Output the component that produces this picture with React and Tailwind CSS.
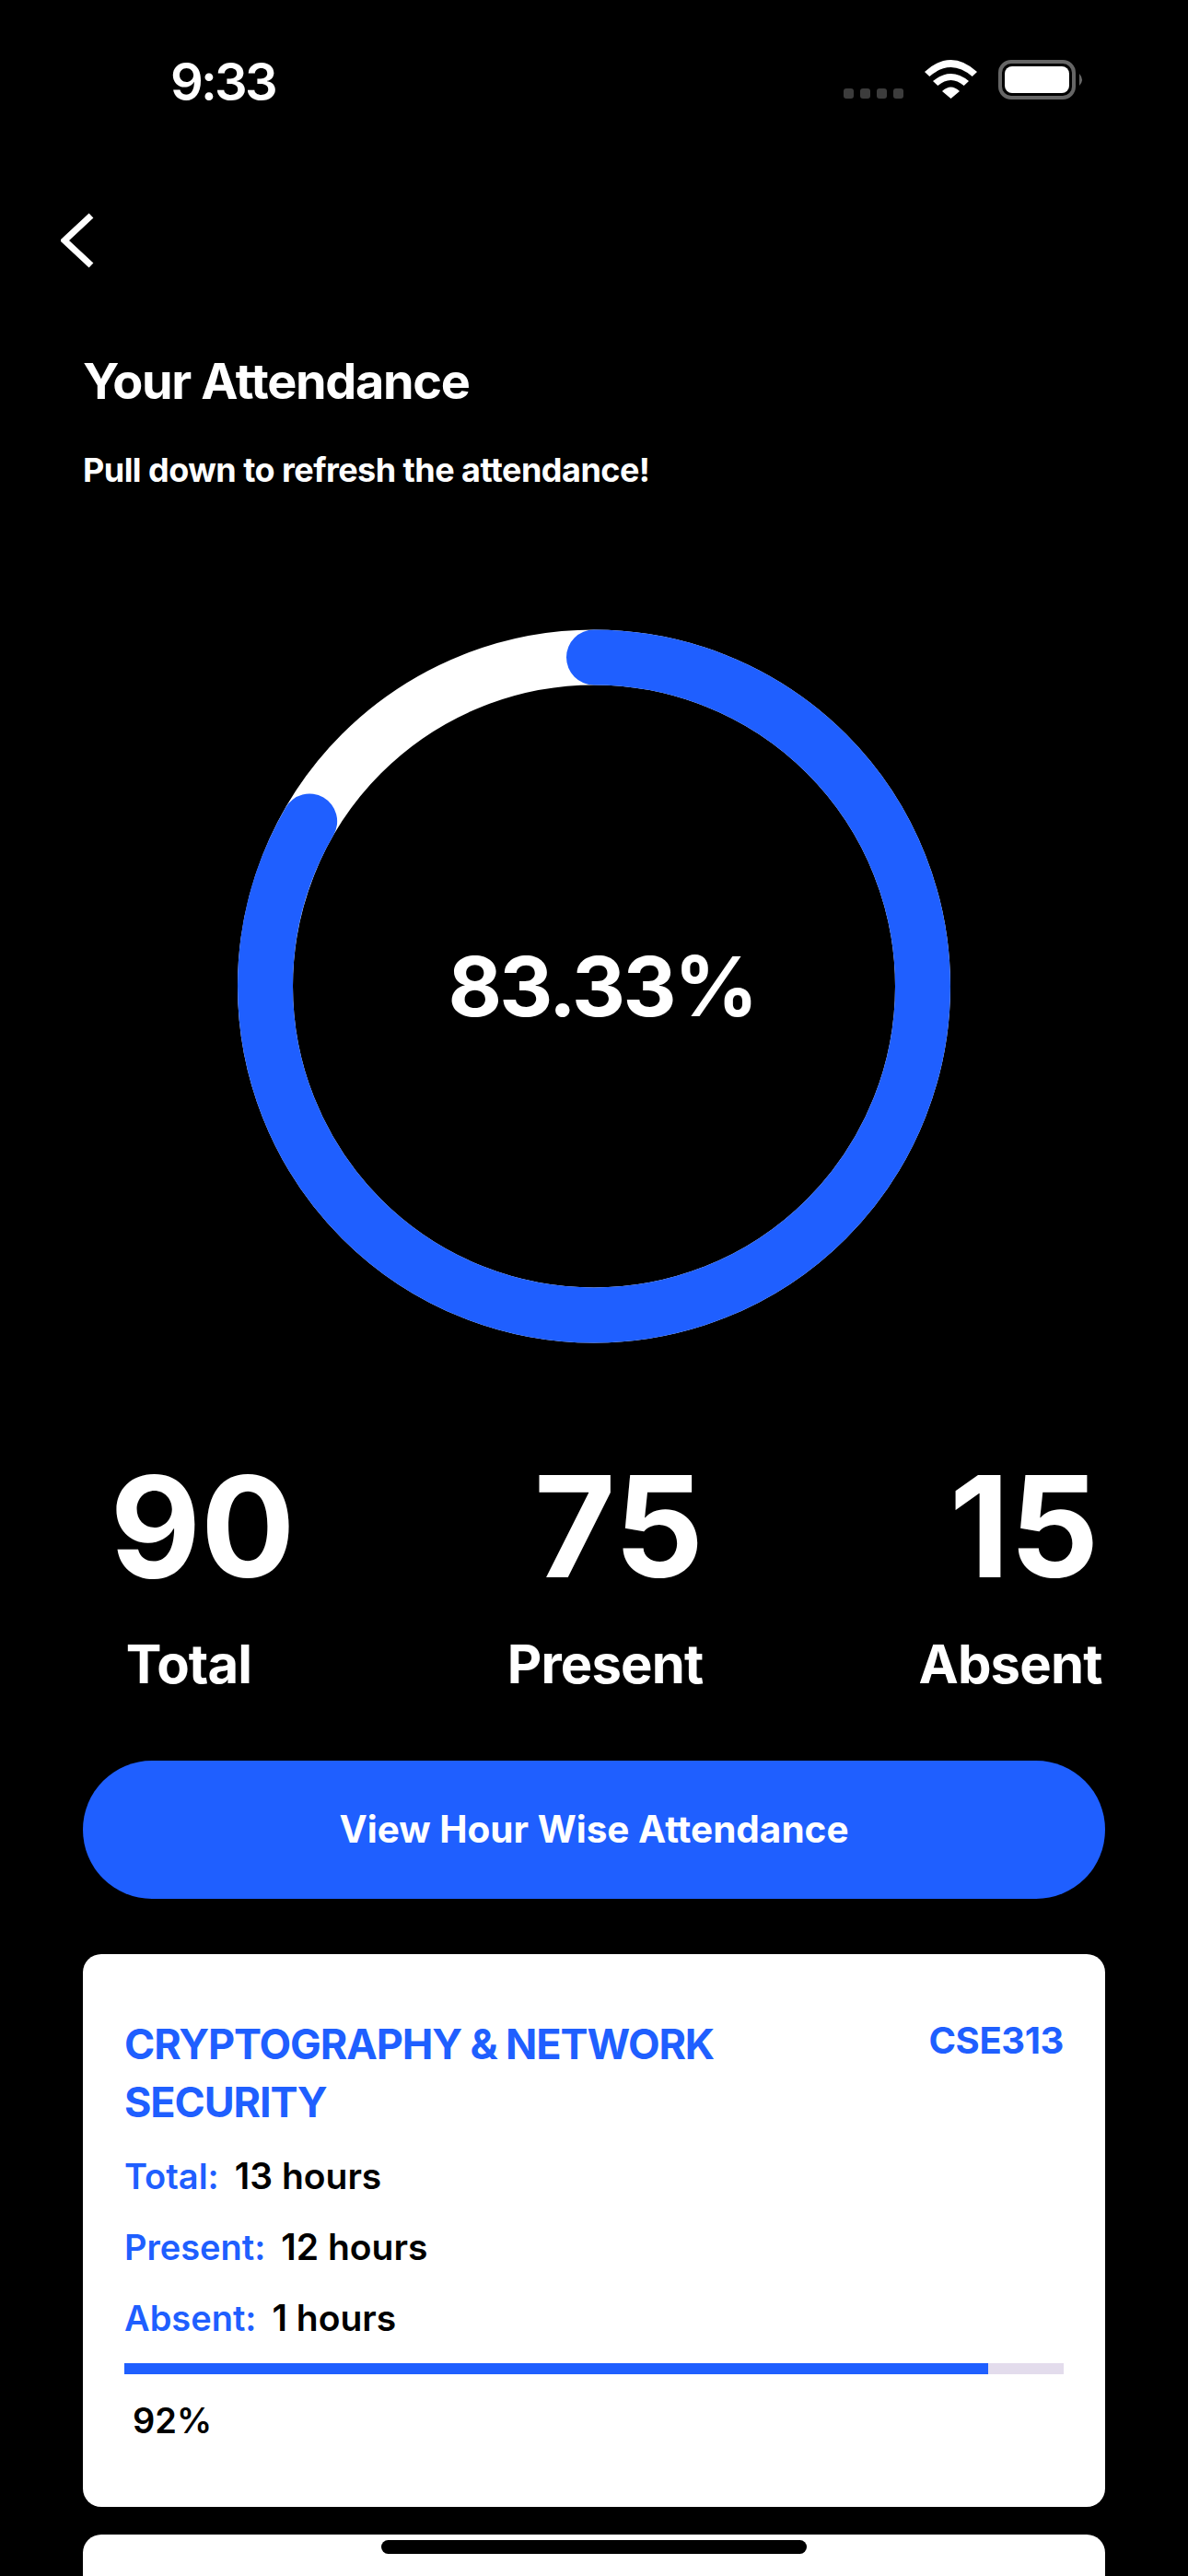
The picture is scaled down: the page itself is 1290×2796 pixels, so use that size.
const StatusBar = () => (
    <div className="flex h-[131px] items-start justify-between pt-[59px] pl-[185px] pr-[112px] text-white">
        <span className="text-[56px] leading-[60px] font-semibold tracking-[-0.05em]">9:33</span>
        <div className="flex items-start pt-[6px]">
            <div className="mt-[31px] flex gap-[7px]">
                <span className="h-[11px] w-[11px] rounded-[3px] bg-[#3c3c3c]" />
                <span className="h-[11px] w-[11px] rounded-[3px] bg-[#3c3c3c]" />
                <span className="h-[11px] w-[11px] rounded-[3px] bg-[#3c3c3c]" />
                <span className="h-[11px] w-[11px] rounded-[3px] bg-[#3c3c3c]" />
            </div>
            <svg className="ml-[23px]" width="57" height="42" viewBox="0 0 57 42" fill="#fff">
                <path d="M0 13 Q28.5 -13 57 13 L51.7 18 Q28.5 -2 5.3 18 Z" />
                <path d="M9 23 Q28.5 7 48 23 L42.7 28 Q28.5 16 14.3 28 Z" />
                <path d="M19 34 Q28.5 25 38 34 L28.5 42 Z" />
            </svg>
            <svg className="ml-[23px]" width="94" height="43" viewBox="0 0 94 43">
                <rect x="2" y="2" width="80" height="39" rx="12" fill="none" stroke="#666" strokeWidth="4" />
                <rect x="7" y="7" width="70" height="29" rx="8" fill="#fff" />
                <path d="M88 15 Q94 21.5 88 28 Z" fill="#666" />
            </svg>
        </div>
    </div>
);

const AttendanceRing = ({ percent }) => {
    const radius = 357;
    const length = 2 * Math.PI * radius;

    return (
        <div className="relative mx-auto mt-[151px] h-[775px] w-[774px]">
            <svg width="774" height="775" viewBox="0 0 774 775" fill="none">
                <circle cx="387" cy="387.5" r={radius} stroke="#fff" strokeWidth="60" />
                <circle
                    cx="387"
                    cy="387.5"
                    r={radius}
                    stroke="#1f5fff"
                    strokeWidth="60"
                    strokeLinecap="round"
                    strokeDasharray={`${(length * percent) / 100} ${length}`}
                    transform="rotate(-90 387 387.5)"
                />
            </svg>
            <div className="absolute inset-0 flex items-center justify-center pl-[17px] text-[90px] font-bold tracking-[-0.03em] text-white">
                {percent.toFixed(2)}%
            </div>
        </div>
    );
};

const stats = [
    { value: 90, label: "Total", box: "ml-[85px] w-[240px]" },
    { value: 75, label: "Present", box: "ml-[212px] w-[240px]" },
    { value: 15, label: "Absent", box: "ml-[200px] w-[240px]" },
];

const Stats = () => (
    <div className="mt-[126px] flex text-white">
        {stats.map((stat) => (
            <div key={stat.label} className={`${stat.box} flex flex-col items-center shrink-0`}>
                <span className="pl-[30px] text-[152px] leading-[146px] font-bold">{stat.value}</span>
                <span className="mt-[42px] text-[58px] leading-[68px] font-bold tracking-[-0.015em]">{stat.label}</span>
            </div>
        ))}
    </div>
);

const CourseCard = () => (
    <div className="mx-[90px] mt-[60px] h-[600px] rounded-[20px] bg-white px-[45px] pt-[66px]">
        <div className="flex items-start justify-between">
            <h3 className="w-[760px] text-[45px] leading-[63px] font-bold tracking-[-0.025em] text-[#1f5fff]">
                CRYPTOGRAPHY &amp; NETWORK SECURITY
            </h3>
            <span className="mt-[3px] text-[40px] leading-[50px] font-bold tracking-[-0.01em] text-[#1f5fff]">CSE313</span>
        </div>
        <div className="mt-[25px] flex flex-col gap-[29px] text-[39px] leading-[48px] font-semibold text-black">
            <p>
                <span className="mr-[17px] text-[38px] text-[#1f5fff]">Total:</span>13 hours
            </p>
            <p>
                <span className="mr-[17px] text-[38px] text-[#1f5fff]">Present:</span>12 hours
            </p>
            <p>
                <span className="mr-[17px] text-[38px] text-[#1f5fff]">Absent:</span>1 hours
            </p>
        </div>
        <div className="mt-[25px] h-[12px] bg-[#e3dcec]">
            <div className="h-full bg-[#1f5fff]" style={{ width: "92%" }} />
        </div>
        <p className="mt-[26px] pl-[9px] text-[38px] leading-[48px] font-semibold text-black">92%</p>
    </div>
);

const App = () => {
    return (
        <div className="relative h-[2796px] w-[1290px] overflow-hidden bg-black font-['Inter',sans-serif]">
            <StatusBar />

            <button className="ml-[66px] mt-[100px] block text-white" aria-label="Back">
                <svg className="block" width="36" height="60" viewBox="0 0 36 60" fill="none">
                    <path d="M33 3 L4 30 L33 57" stroke="#fff" strokeWidth="7" />
                </svg>
            </button>

            <div className="mt-[93px] px-[90px] text-white">
                <h1 className="text-[54px] leading-[60px] font-bold tracking-[-0.025em]">Your Attendance</h1>
                <p className="mt-[44px] text-[36px] leading-[44px] font-bold tracking-[-0.015em]">Pull down to refresh the attendance!</p>
            </div>

            <AttendanceRing percent={83.33} />
            <Stats />

            <button className="mx-[90px] mt-[71px] block h-[150px] w-[1110px] rounded-[75px] bg-[#1f5fff] text-[40.5px] font-bold text-white">
                View Hour Wise Attendance
            </button>

            <CourseCard />
            <div className="mx-[90px] mt-[30px] h-[200px] rounded-[20px] bg-white" />

            {/* home indicator sits on top of the scrolling list */}
            <div className="absolute bottom-[24px] left-[414px] h-[15px] w-[462px] rounded-full bg-black" />
        </div>
    );
};

export default App;
